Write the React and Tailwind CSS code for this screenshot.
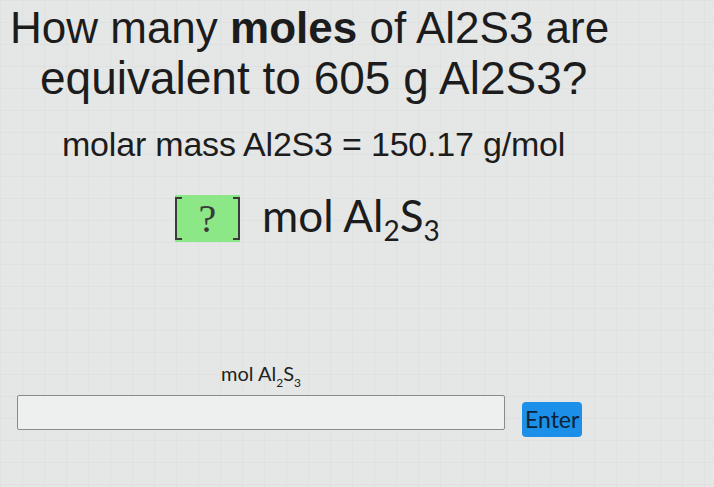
import React from 'react';

const App = () => {
    return (
        <div
            className="w-[714px] h-[487px] overflow-hidden flex flex-col bg-[#e5e7e6] bg-[linear-gradient(to_right,rgba(0,0,0,0.025)_1px,transparent_1px),linear-gradient(to_bottom,rgba(0,0,0,0.025)_1px,transparent_1px)] bg-[size:22px_22px] text-[#1c1c1c] pt-[3px] pl-[10px]"
            style={{ fontFamily: '"Liberation Sans", Arial, sans-serif' }}
        >
            {/* Question */}
            <p className="text-[44px] leading-[49px]">
                How many <span className="font-bold">moles</span> of Al2S3 are
            </p>
            <p className="text-[46px] leading-[52px] pl-[30px]">
                equivalent to 605 g Al2S3?
            </p>
            <p className="text-[34px] leading-[40px] pl-[52px] mt-[20px] tracking-[-0.2px]">
                molar mass Al2S3 = 150.17 g/mol
            </p>

            {/* Answer line */}
            <div className="flex items-center pl-[165px] mt-[29px]" style={{ fontFamily: 'Lato, "Noto Sans", sans-serif' }}>
                <div className="w-[65px] h-[47px] flex items-stretch justify-between py-[2px] bg-[#8ce886]">
                    <span className="w-[7px] border-l-2 border-t-2 border-b-2 border-[#3a3a3a]"></span>
                    <span className="self-center text-[40px] text-[#3a3a3a] leading-none" style={{ fontFamily: '"Liberation Serif", serif' }}>?</span>
                    <span className="w-[7px] border-r-2 border-t-2 border-b-2 border-[#3a3a3a]"></span>
                </div>
                <span className="text-[44px] leading-none ml-[22px]">
                    mol Al<span className="text-[28px] align-[-9px]">2</span>S<span className="text-[28px] align-[-9px]">3</span>
                </span>
            </div>

            {/* Input area */}
            <div className="flex flex-col pl-[7px] mt-[117px]" style={{ fontFamily: 'Lato, "Noto Sans", sans-serif' }}>
                <div className="pl-[204px] text-[20px] leading-[24px] text-[#222]">
                    mol Al<span className="text-[12px] align-[-6px]">2</span>S<span className="text-[12px] align-[-6px]">3</span>
                </div>
                <div className="flex items-start gap-[17px]">
                    <div className="w-[488px] h-[35px] bg-[#eeefef] border border-[#8a8a8a] rounded-[2px]"></div>
                    <button className="mt-[7px] h-[35px] px-[3px] bg-[#1c8fe8] rounded-[4px] text-[23px] text-[#0e2236] leading-none">Enter</button>
                </div>
            </div>
        </div>
    );
};

export default App;
